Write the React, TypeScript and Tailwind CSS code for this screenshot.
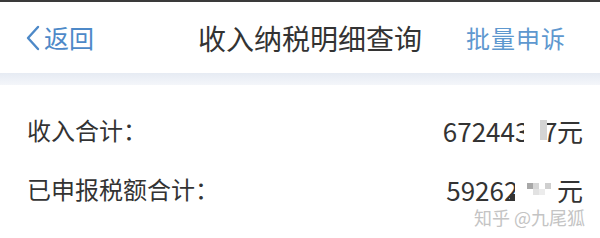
export default function App() {
  const font = { fontFamily: '"Noto Sans CJK SC", "Noto Sans", sans-serif' };
  return (
    <div className="w-[600px] h-[238px] overflow-hidden bg-white" style={font}>
      <div className="h-[2px] bg-[#3a3a3a]" />
      <header className="flex h-[71px] items-center justify-between bg-white pl-[25px] pr-[34px]">
        <button className="flex items-center gap-[3px] text-[25px] text-[#4d89c8]">
          <svg width="16" height="26" viewBox="0 0 16 26" fill="none">
            <path d="M13 2 L3 13 L13 24" stroke="#4d89c8" strokeWidth="2.4" strokeLinecap="round" strokeLinejoin="round" />
          </svg>
          <span>返回</span>
        </button>
        <h1 className="ml-[60px] text-[28px] font-normal text-[#333333]">收入纳税明细查询</h1>
        <button className="text-[24px] text-[#5e98cf] tracking-[1px]">批量申诉</button>
      </header>
      <div className="h-[12px] bg-gradient-to-b from-[#e6ebf3] to-[#f4f6fa]" />
      <div className="px-[27px] pt-[22px] text-[#333333]">
        <div className="flex h-[46px] items-center justify-between">
          <span className="text-[24px]">收入合计：</span>
          <span className="mr-[-10px] flex items-center text-[26px]">
            <span>67244</span>
            <span className="inline-block w-[9px] overflow-hidden">3</span>
            <span className="inline-block w-[16px]" />
            <span className="inline-block h-[20px] w-[7px] bg-[#d4d4d4]" />
            <span className="inline-block w-[10px] overflow-hidden text-right">
              <span className="ml-[-4px]">7</span>
            </span>
            <span>元</span>
          </span>
        </div>
        <div className="mt-[13px] flex h-[46px] items-center justify-between">
          <span className="text-[24px]">已申报税额合计：</span>
          <span className="relative mr-[-10px] flex items-center text-[26px]">
            <span>5926</span>
            <span className="relative inline-block w-[11px] overflow-hidden">
              2
              <span className="absolute right-0 bottom-[9px] h-[6px] w-[5px] bg-[#333]" />
            </span>
            <span className="ml-[12px] flex flex-col">
              <span className="flex">
                <span className="h-[6px] w-[6px] bg-[#a8a8a8]" />
                <span className="h-[6px] w-[6px] bg-[#d6d6d6]" />
                <span className="h-[6px] w-[6px] bg-white" />
                <span className="h-[6px] w-[6px] bg-[#cfcfcf]" />
              </span>
              <span className="flex">
                <span className="h-[6px] w-[6px] bg-white" />
                <span className="h-[6px] w-[6px] bg-[#e2e2e2]" />
                <span className="h-[6px] w-[6px] bg-[#ececec]" />
                <span className="h-[6px] w-[6px] bg-white" />
              </span>
            </span>
            <span className="ml-[6px]">元</span>
          </span>
        </div>
        <div className="mr-[-12px] mt-[-6px] text-right text-[18px] leading-[22px] text-[#c4c4c4]">知乎 @九尾狐</div>
      </div>
    </div>
  );
}
